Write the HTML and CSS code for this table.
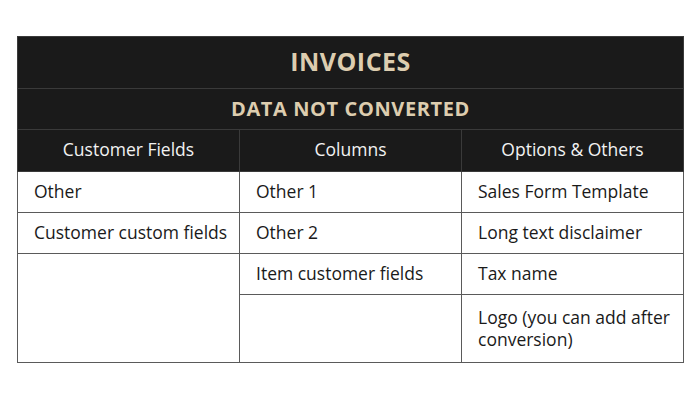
FILE: index.html
```html
<!DOCTYPE html>
<html>
<head>
<meta charset="utf-8">
<link rel="stylesheet" href="styles.css">
</head>
<body>
<table class="grid">
  <colgroup><col class="c"><col class="c"><col class="c"></colgroup>
  <tr class="title"><th colspan="3">INVOICES</th></tr>
  <tr class="subtitle"><th colspan="3">DATA NOT CONVERTED</th></tr>
  <tr class="head"><th>Customer Fields</th><th>Columns</th><th>Options &amp; Others</th></tr>
  <tr class="row"><td>Other</td><td>Other 1</td><td>Sales Form Template</td></tr>
  <tr class="row"><td>Customer custom fields</td><td>Other 2</td><td>Long text disclaimer</td></tr>
  <tr class="row"><td rowspan="2"></td><td>Item customer fields</td><td>Tax name</td></tr>
  <tr class="row tall"><td></td><td>Logo (you can add after conversion)</td></tr>
</table>
</body>
</html>
```
FILE: styles.css
```css
html, body {
  margin: 0;
  background: #fff;
}
body {
  padding: 36px 17px 0 17px;
  font-family: "Open Sans", "Noto Sans", sans-serif;
}
.grid {
  width: 666px;
  border-collapse: collapse;
  table-layout: fixed;
}
.grid .c { width: 222px; }
.grid th, .grid td {
  border: 1px solid #5a5a5a;
  padding: 0 0 3px 0;
}
.title th {
  background: #1a1a1a;
  color: #ddcdaf;
  height: 48px;
  font-size: 25px;
  font-weight: 700;
  letter-spacing: 0.5px;
  border-color: #3a3a3a;
}
.subtitle th {
  background: #1a1a1a;
  color: #ddcdaf;
  height: 38px;
  padding-bottom: 2px;
  font-size: 20px;
  font-weight: 700;
  letter-spacing: 0.6px;
  border-color: #3a3a3a;
}
.head th {
  background: #1a1a1a;
  color: #f2f2f2;
  height: 38px;
  font-size: 17.5px;
  font-weight: 400;
  border-color: #3a3a3a;
}
.head th + th { border-left-color: #5a5a5a; }
.row td {
  height: 38px;
  padding: 0 0 2px 16px;
  font-size: 17.5px;
  color: #1a1a1a;
  vertical-align: middle;
  line-height: 22px;
}
.row.tall td { height: 65px; }
```
